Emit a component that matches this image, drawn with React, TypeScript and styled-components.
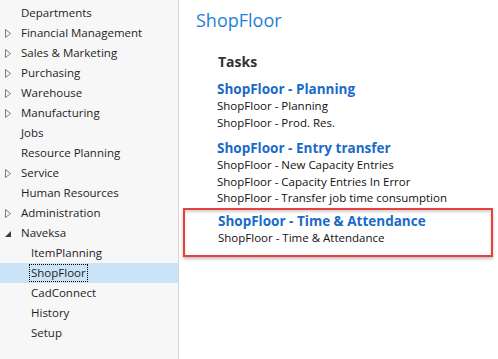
import React from "react";
import styled, { createGlobalStyle } from "styled-components";

const GlobalStyle = createGlobalStyle`
  html, body {
    margin: 0;
    padding: 0;
    background: #ffffff;
  }
  body {
    font-family: "Open Sans", "Noto Sans", sans-serif;
  }
`;

const Page = styled.div`
  display: flex;
  width: 498px;
  height: 359px;
  overflow: hidden;
`;

const Sidebar = styled.nav`
  width: 178px;
  flex-shrink: 0;
  background: #f7f7f7;
  border-right: 1px solid #d6d6d6;
  padding-top: 3px;
`;

const NavRow = styled.div<{ $level: number; $selected?: boolean }>`
  position: relative;
  height: 20px;
  display: flex;
  align-items: center;
  padding-left: ${(p) => (p.$level === 1 ? 21 : 31)}px;
  background: ${(p) => (p.$selected ? "#cce4f7" : "transparent")};
  font-size: 11.5px;
  color: #1e1e1e;
  white-space: nowrap;
`;

const Label = styled.span<{ $focused?: boolean }>`
  padding: 0 1px;
  line-height: 16px;
  border: 1px dotted ${(p) => (p.$focused ? "#000" : "transparent")};
  margin-left: -2px;
`;

const Toggle = styled.span`
  position: absolute;
  left: 4px;
  top: 6px;
  width: 8px;
  height: 9px;
  display: flex;
`;

const Main = styled.main`
  flex: 1;
  padding: 8px 0 0 17px;
`;

const Title = styled.h1`
  margin: 0;
  font-size: 18px;
  font-weight: 400;
  color: #1e7fd6;
  line-height: 24px;
`;

const Tasks = styled.section`
  padding: 20px 0 0 0;
  display: flex;
  flex-direction: column;
`;

const TasksHeading = styled.h2`
  margin: 0 0 0 22px;
  font-size: 14px;
  font-weight: 700;
  color: #333333;
  line-height: 20px;
`;

const Group = styled.div<{ $highlight?: boolean }>`
  display: flex;
  flex-direction: column;
  box-sizing: border-box;
  margin-top: ${(p) => (p.$highlight ? 1 : 8)}px;
  margin-left: ${(p) => (p.$highlight ? -13 : 0)}px;
  width: ${(p) => (p.$highlight ? "310px" : "auto")};
  padding: ${(p) => (p.$highlight ? "2px 0 9px 33px" : "0 0 0 21px")};
  border: ${(p) => (p.$highlight ? "2px solid #e8403f" : "none")};
  box-shadow: ${(p) =>
    p.$highlight
      ? "0 2px 3px rgba(0,0,0,0.25), inset 0 2px 3px rgba(0,0,0,0.18)"
      : "none"};
`;

const GroupTitle = styled.a`
  font-size: 13.5px;
  font-weight: 700;
  color: #1a6ac9;
  line-height: 18px;
  text-decoration: none;
  white-space: nowrap;
`;

const TaskLink = styled.span`
  font-size: 11.5px;
  color: #111111;
  line-height: 16.5px;
  white-space: nowrap;
`;

const Outline = () => (
  <svg width="8" height="9" viewBox="0 0 8 9">
    <path d="M1.5 0.5 L6.5 4.5 L1.5 8.5 Z" fill="none" stroke="#7a7a7a" strokeWidth="1" />
  </svg>
);

const Expanded = () => (
  <svg width="8" height="9" viewBox="0 0 8 9">
    <path d="M7 2 L7 8 L1 8 Z" fill="#3c3c3c" />
  </svg>
);

type Item = { label: string; level: number; toggle?: "closed" | "open"; selected?: boolean };

const nav: Item[] = [
  { label: "Departments", level: 1 },
  { label: "Financial Management", level: 1, toggle: "closed" },
  { label: "Sales & Marketing", level: 1, toggle: "closed" },
  { label: "Purchasing", level: 1, toggle: "closed" },
  { label: "Warehouse", level: 1, toggle: "closed" },
  { label: "Manufacturing", level: 1, toggle: "closed" },
  { label: "Jobs", level: 1 },
  { label: "Resource Planning", level: 1 },
  { label: "Service", level: 1, toggle: "closed" },
  { label: "Human Resources", level: 1 },
  { label: "Administration", level: 1, toggle: "closed" },
  { label: "Naveksa", level: 1, toggle: "open" },
  { label: "ItemPlanning", level: 2 },
  { label: "ShopFloor", level: 2, selected: true },
  { label: "CadConnect", level: 2 },
  { label: "History", level: 2 },
  { label: "Setup", level: 2 },
];

const groups = [
  {
    title: "ShopFloor - Planning",
    links: ["ShopFloor - Planning", "ShopFloor - Prod. Res."],
  },
  {
    title: "ShopFloor - Entry transfer",
    links: [
      "ShopFloor - New Capacity Entries",
      "ShopFloor - Capacity Entries In Error",
      "ShopFloor - Transfer job time consumption",
    ],
  },
  {
    title: "ShopFloor - Time & Attendance",
    links: ["ShopFloor - Time & Attendance"],
    highlight: true,
  },
];

export default function App() {
  return (
    <Page>
      <GlobalStyle />
      <Sidebar>
        {nav.map((item) => (
          <NavRow key={item.label} $level={item.level} $selected={item.selected}>
            {item.toggle && <Toggle>{item.toggle === "open" ? <Expanded /> : <Outline />}</Toggle>}
            <Label $focused={item.selected}>{item.label}</Label>
          </NavRow>
        ))}
      </Sidebar>
      <Main>
        <Title>ShopFloor</Title>
        <Tasks>
          <TasksHeading>Tasks</TasksHeading>
          {groups.map((g) => (
            <Group key={g.title} $highlight={g.highlight}>
              <GroupTitle href="#">{g.title}</GroupTitle>
              {g.links.map((l) => (
                <TaskLink key={l}>{l}</TaskLink>
              ))}
            </Group>
          ))}
        </Tasks>
      </Main>
    </Page>
  );
}
